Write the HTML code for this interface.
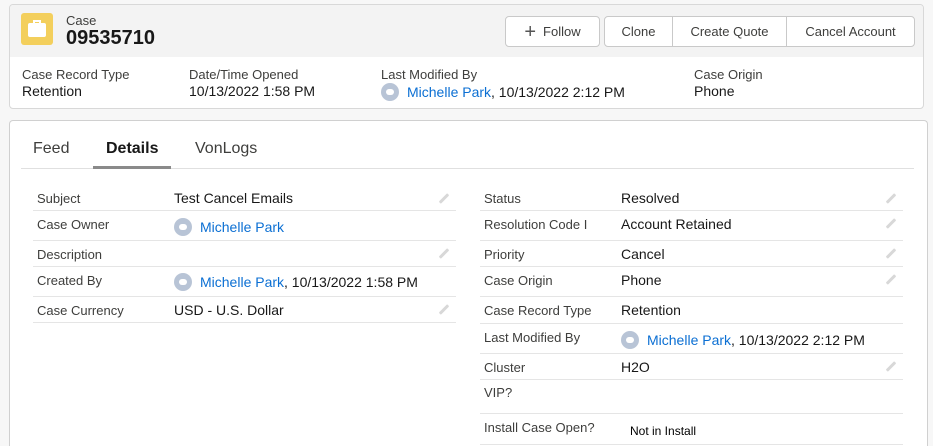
<!DOCTYPE html>
<html><head><style>
*{box-sizing:border-box;margin:0;padding:0}
html,body{width:933px;height:446px;overflow:hidden}
body{background:#f7f7f7;font-family:"Liberation Sans",Arial,sans-serif;color:#181818;position:relative}
.a{position:absolute;white-space:nowrap}
.card1{position:absolute;left:9px;top:4px;width:915px;height:105px;border:1px solid #d8d8d8;border-radius:4px;background:#fff;overflow:hidden}
.top{position:absolute;left:0;top:0;width:100%;height:52px;background:#f3f3f3}
.card2{position:absolute;left:9px;top:120px;width:919px;height:326px;border:1px solid #d0d0d0;border-bottom:none;border-radius:4px 4px 0 0;background:#fff}
.lbl{font-size:13px;color:#3e3e3c}
.val{font-size:14px;color:#181818}
.lnk{color:#0b6fd3}
.btn{position:absolute;height:31px;border:1px solid #c9c9c9;background:#fff;font-size:13px;color:#3e3e3c;display:flex;align-items:center;justify-content:center}
.hl{position:absolute;height:1px;background:#e5e5e5}
.av{display:inline-block;width:18px;height:18px;border-radius:50%;background:#b8c4d6;vertical-align:-4px;margin-right:8px;position:relative}
.av:after{content:"";position:absolute;left:5px;top:6px;width:8px;height:6px;border-radius:3px;background:#fff}
.pen{position:absolute;width:12px;height:3px;background:#d8d8d8;transform:rotate(-45deg);border-radius:1px}
</style></head><body>
<div class="card1"><div class="top"></div>
<div class="a" style="left:11px;top:8px;width:32px;height:32px;background:#f3cf5c;border-radius:3px"></div>
<div class="a" style="left:18px;top:18px;width:18px;height:14px;background:#fff;border-radius:2px"></div>
<div class="a" style="left:23px;top:15px;width:8px;height:4px;border:2px solid #fff;border-bottom:none"></div>
<div class="a" style="left:56px;top:8px;font-size:13px;color:#3e3e3c">Case</div>
<div class="a" style="left:56px;top:22px;font-size:20px;font-weight:bold">09535710</div>
<div class="btn" style="left:495px;top:11px;width:95px;border-radius:4px"><span style="font-size:20px;margin-right:7px;line-height:1;font-weight:300;color:#555">+</span>Follow</div>
<div class="btn" style="left:594px;top:11px;width:69px;border-radius:4px 0 0 4px">Clone</div>
<div class="btn" style="left:662px;top:11px;width:115px;border-radius:0">Create Quote</div>
<div class="btn" style="left:776px;top:11px;width:129px;border-radius:0 4px 4px 0">Cancel Account</div>
<div class="a lbl" style="left:12px;top:62px">Case Record Type</div>
<div class="a val" style="left:12px;top:78px">Retention</div>
<div class="a lbl" style="left:179px;top:62px">Date/Time Opened</div>
<div class="a val" style="left:179px;top:78px">10/13/2022 1:58 PM</div>
<div class="a lbl" style="left:371px;top:62px">Last Modified By</div>
<div class="a val" style="left:371px;top:78px"><span class="av"></span><span class="lnk">Michelle Park</span>, 10/13/2022 2:12 PM</div>
<div class="a lbl" style="left:684px;top:62px">Case Origin</div>
<div class="a val" style="left:684px;top:78px">Phone</div>
</div>
<div class="card2"></div>
<div class="a" style="left:33px;top:140px;font-size:16px;color:#3e3e3c">Feed</div>
<div class="a" style="left:106px;top:140px;font-size:16px;font-weight:bold">Details</div>
<div class="a" style="left:195px;top:140px;font-size:16px;color:#3e3e3c">VonLogs</div>
<div class="hl" style="left:21px;top:168px;width:893px;background:#e0e0e0"></div>
<div class="a" style="left:93px;top:166px;width:78px;height:3px;background:#8a8a8a"></div>

<div class="a lbl" style="left:37px;top:191px">Subject</div><div class="a val" style="left:174px;top:190px">Test Cancel Emails</div><div class="pen" style="left:438px;top:197px"></div>
<div class="hl" style="left:33px;top:210px;width:423px"></div>
<div class="a lbl" style="left:37px;top:217px">Case Owner</div><div class="a val" style="left:174px;top:218px"><span class="av"></span><span class="lnk">Michelle Park</span></div>
<div class="hl" style="left:33px;top:240px;width:423px"></div>
<div class="a lbl" style="left:37px;top:247px">Description</div><div class="pen" style="left:438px;top:252px"></div>
<div class="hl" style="left:33px;top:266px;width:423px"></div>
<div class="a lbl" style="left:37px;top:273px">Created By</div><div class="a val" style="left:174px;top:273px"><span class="av"></span><span class="lnk">Michelle Park</span>, 10/13/2022 1:58 PM</div>
<div class="hl" style="left:33px;top:296px;width:423px"></div>
<div class="a lbl" style="left:37px;top:303px">Case Currency</div><div class="a val" style="left:174px;top:302px">USD - U.S. Dollar</div><div class="pen" style="left:438px;top:308px"></div>
<div class="hl" style="left:33px;top:322px;width:423px"></div>

<div class="a lbl" style="left:484px;top:191px">Status</div><div class="a val" style="left:621px;top:190px">Resolved</div><div class="pen" style="left:885px;top:197px"></div>
<div class="hl" style="left:480px;top:210px;width:423px"></div>
<div class="a lbl" style="left:484px;top:217px">Resolution Code I</div><div class="a val" style="left:621px;top:216px">Account Retained</div><div class="pen" style="left:885px;top:222px"></div>
<div class="hl" style="left:480px;top:240px;width:423px"></div>
<div class="a lbl" style="left:484px;top:247px">Priority</div><div class="a val" style="left:621px;top:246px">Cancel</div><div class="pen" style="left:885px;top:252px"></div>
<div class="hl" style="left:480px;top:266px;width:423px"></div>
<div class="a lbl" style="left:484px;top:273px">Case Origin</div><div class="a val" style="left:621px;top:272px">Phone</div><div class="pen" style="left:885px;top:278px"></div>
<div class="hl" style="left:480px;top:296px;width:423px"></div>
<div class="a lbl" style="left:484px;top:303px">Case Record Type</div><div class="a val" style="left:621px;top:302px">Retention</div>
<div class="hl" style="left:480px;top:323px;width:423px"></div>
<div class="a lbl" style="left:484px;top:330px">Last Modified By</div><div class="a val" style="left:621px;top:331px"><span class="av"></span><span class="lnk">Michelle Park</span>, 10/13/2022 2:12 PM</div>
<div class="hl" style="left:480px;top:353px;width:423px"></div>
<div class="a lbl" style="left:484px;top:360px">Cluster</div><div class="a val" style="left:621px;top:359px">H2O</div><div class="pen" style="left:885px;top:365px"></div>
<div class="hl" style="left:480px;top:379px;width:423px"></div>
<div class="a lbl" style="left:484px;top:385px">VIP?</div>
<div class="hl" style="left:480px;top:413px;width:423px"></div>
<div class="a lbl" style="left:484px;top:420px">Install Case Open?</div><div class="a" style="left:630px;top:424px;font-size:12px;color:#000">Not in Install</div>
<div class="hl" style="left:480px;top:444px;width:423px"></div>
</body></html>
